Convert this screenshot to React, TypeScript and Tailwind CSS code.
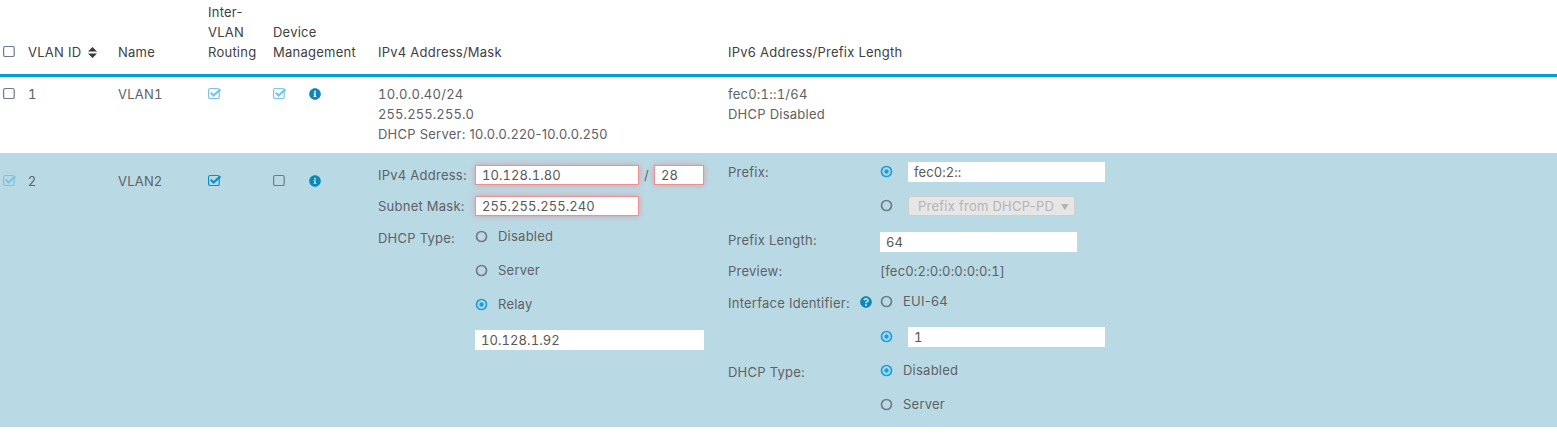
import { FaInfoCircle, FaQuestionCircle } from "react-icons/fa";

const font = "font-['Inter','Liberation_Sans',sans-serif]";

function Box({ checked = false, tone = "dark" }: { checked?: boolean; tone?: "dark" | "light" }) {
  const color = tone === "light" ? "#76c6e8" : checked ? "#0a8fc4" : "#6d7a88";
  return (
    <svg width="14" height="13" viewBox="0 0 14 13" className="block shrink-0" fill="none">
      <rect x="0.6" y="1.5" width="10.6" height="10" rx="1.6" stroke={color} strokeWidth="1.2" />
      {checked && <path d="M2.8 5.8l2.8 2.8L12.4 2.4" stroke={color} strokeWidth="2.2" />}
    </svg>
  );
}

function Radio({ on = false }: { on?: boolean }) {
  return (
    <svg width="13" height="13" viewBox="0 0 13 13" className="block shrink-0" fill="none">
      <circle cx="6.5" cy="6.5" r="5" stroke={on ? "#1a9fdc" : "#6f7c89"} strokeWidth="1.7" />
      {on && <circle cx="6.5" cy="6.5" r="2.2" fill="#1a9fdc" />}
    </svg>
  );
}

function Field({ value, w, error = false }: { value: string; w: string; error?: boolean }) {
  return (
    <div
      className={`flex h-[20px] items-center bg-white px-[6px] tracking-[0.08px] tabular-nums text-[#58595b] ${w} ${
        error ? "border border-[#f08f8f] shadow-[0_0_6px_rgba(240,120,120,0.6)]" : ""
      }`}
    >
      {value}
    </div>
  );
}

function RadioLine({ on, label, h = "h-[34px]" }: { on?: boolean; label: string; h?: string }) {
  return (
    <div className={`flex items-center ${h}`}>
      <Radio on={on} />
      <span className="ml-[10px]">{label}</span>
    </div>
  );
}

export default function App() {
  return (
    <div className={`${font} h-[436px] w-[1557px] overflow-hidden bg-white text-[13px] leading-[20px] tracking-[0.24px] text-[#606164]`}>
      {/* header */}
      <div className="flex h-[77px] items-end border-b-[3px] border-[#049fd9] pb-[12px] text-[#3f4042]">
        <div className="w-[28px] pb-[4px] pl-[3px]"><Box /></div>
        <div className="flex w-[90px] items-center gap-[7px]">
          VLAN ID
          <svg width="9" height="11" viewBox="0 0 9 11" fill="#3a3a3c"><path d="M4.5 0L9 4.5H0zM4.5 11L0 6.5H9z" /></svg>
        </div>
        <div className="w-[90px]">Name</div>
        <div className="w-[65px]">Inter-<br />VLAN<br />Routing</div>
        <div className="w-[105px]">Device<br />Management</div>
        <div className="w-[350px]">IPv4 Address/Mask</div>
        <div>IPv6 Address/Prefix Length</div>
      </div>

      {/* row 1 */}
      <div className="flex h-[76px] pt-[7px]">
        <div className="w-[28px] pl-[3px] pt-[3px]"><Box /></div>
        <div className="w-[90px] tabular-nums">1</div>
        <div className="w-[90px] tabular-nums">VLAN1</div>
        <div className="w-[65px] pt-[3px]"><Box checked tone="light" /></div>
        <div className="flex w-[105px] gap-[22px] pt-[3px]">
          <Box checked tone="light" />
          <div className="pt-[1px]"><FaInfoCircle size={12} color="#0d87b6" /></div>
        </div>
        <div className="w-[350px]">
          <div className="tabular-nums">10.0.0.40/24</div>
          <div className="tabular-nums tracking-[0.1px]">255.255.255.0</div>
          <div>DHCP Server: 10.0.0.220-10.0.0.250</div>
        </div>
        <div>
          <div className="tabular-nums">fec0:1::1/64</div>
          <div>DHCP Disabled</div>
        </div>
      </div>

      {/* row 2 */}
      <div className="flex h-[274px] bg-[#b9dae5]">
        <div className="w-[28px] pl-[3px] pt-[21px]"><Box checked tone="light" /></div>
        <div className="w-[90px] pt-[18px]">2</div>
        <div className="w-[90px] pt-[18px]">VLAN2</div>
        <div className="w-[65px] pt-[21px]"><Box checked /></div>
        <div className="flex w-[105px] gap-[22px] pt-[21px]">
          <Box />
          <div className="pt-[1px]"><FaInfoCircle size={12} color="#0d87b6" /></div>
        </div>

        {/* IPv4 */}
        <div className="w-[350px] pt-[12px]">
          <div className="grid grid-cols-[97px_1fr]">
            <div className="h-[31px]">IPv4 Address:</div>
            <div className="flex gap-[5px]">
              <Field value="10.128.1.80" w="w-[164px]" error />
              <span className="w-[5px]">/</span>
              <Field value="28" w="w-[50px]" error />
            </div>
            <div className="h-[23px]">Subnet Mask:</div>
            <Field value="255.255.255.240" w="w-[164px]" error />
            <div className="pt-[9px]">DHCP Type:</div>
            <div>
              <RadioLine label="Disabled" />
              <RadioLine label="Server" />
              <RadioLine on label="Relay" />
              <div className="pt-[9px]"><Field value="10.128.1.92" w="w-[229px]" /></div>
            </div>
          </div>
        </div>

        {/* IPv6 */}
        <div className="pt-[9px]">
          <div className="grid grid-cols-[152px_1fr]">
            <div>Prefix:</div>
            <div className="flex h-[34px] gap-[15px]">
              <div className="pt-[3px]"><Radio on /></div>
              <Field value="fec0:2::" w="w-[197px]" />
            </div>
            <div />
            <div className="flex h-[36px] gap-[15px]">
              <div className="pt-[3px]"><Radio /></div>
              <div className="relative flex h-[20px] w-[167px] items-center rounded-[3px] border border-[#cfcfcf] bg-[#e6e6e6] pl-[9px] text-[#b4b4b4]">
                Prefix from DHCP-PD
                <span className="absolute right-[5px] top-[0px] text-[8px]">▼</span>
              </div>
            </div>
            <div className="-mt-[2px]">Prefix Length:</div>
            <div className="h-[29px]"><Field value="64" w="w-[197px]" /></div>
            <div className="h-[30px]">Preview:</div>
            <div className="tabular-nums tracking-[0.18px]">[fec0:2:0:0:0:0:0:1]</div>
            <div className="relative h-[36px] pt-[2px]">
              Interface Identifier:
              <span className="absolute left-[132px] top-[5px]"><FaQuestionCircle size={12} color="#0d87b6" /></span>
            </div>
            <RadioLine label="EUI-64" h="h-[20px]" />
            <div />
            <div className="flex h-[26px] gap-[15px]">
              <div className="pt-[3px]"><Radio on /></div>
              <Field value="1" w="w-[197px]" />
            </div>
            <div className="pt-[9px]">DHCP Type:</div>
            <div>
              <RadioLine on label="Disabled" />
              <RadioLine label="Server" />
            </div>
          </div>
        </div>
      </div>
    </div>
  );
}
